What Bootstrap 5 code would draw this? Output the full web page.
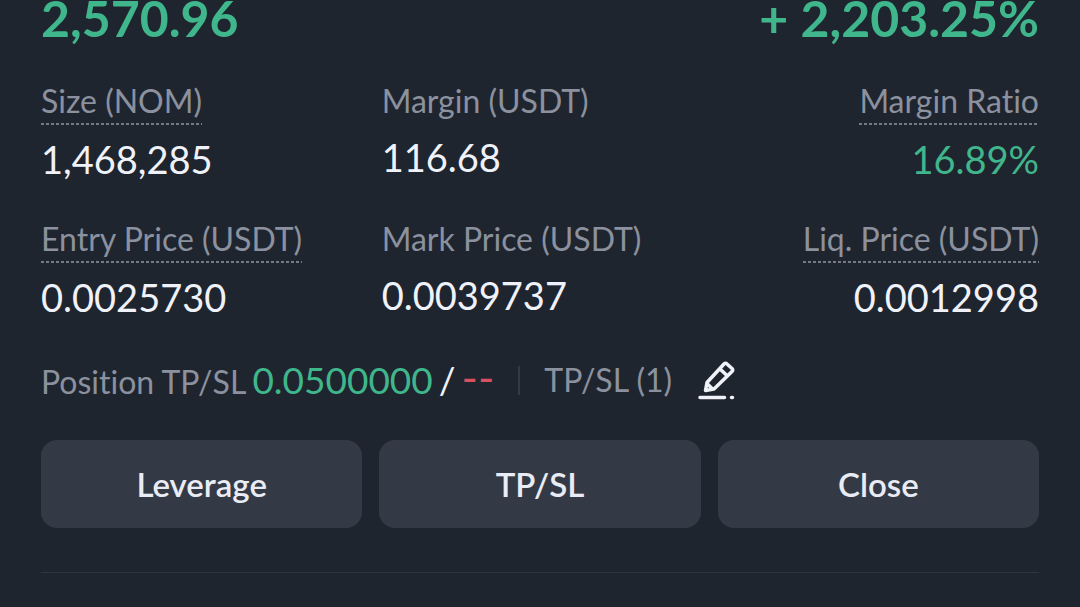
<!DOCTYPE html>
<html lang="en" data-bs-theme="dark">
<head>
<meta charset="utf-8">
<meta name="viewport" content="width=device-width, initial-scale=1">
<title>Position</title>
<link href="https://cdn.jsdelivr.net/npm/bootstrap@5.3.0/dist/css/bootstrap.min.css" rel="stylesheet">
<style>
  body { background: #1f252f; color: #f0f2fa; font-family: Lato, "Open Sans", sans-serif; font-variant-ligatures: none; }
  .position-panel { padding: 0 41px; }
  .gain { color: #3fb68b; }
  .loss { color: #d9505f; }
  .headline { font-size: 50px; line-height: 36px; font-weight: 700; }
  .stats { display: grid; grid-template-columns: repeat(3, 1fr); gap: 40px 24px; margin-top: 47px; }
  .stat-label { color: #8b919e; font-size: 32px; line-height: 36px; font-weight: 400; white-space: nowrap; }
  .stat-value { font-size: 38px; line-height: 44px; margin: 16px 0 0; }
  .hint::after { content: ""; display: block; height: 2px; margin-top: 4px;
    background: repeating-linear-gradient(90deg, #747a86 0 3px, transparent 3px 5px); }
  .hint + .stat-value { margin-top: 12px; }
  .orders { margin-top: 39px; line-height: 44px; }
  .order-set { gap: 6px; }
  .order-price { font-size: 37px; }
  .order-empty { font-size: 44px; line-height: 36px; }
  .split { width: 2px; height: 29px; background: #343a45; margin: 0 24px; }
  .edit { line-height: 0; margin-left: 26px; color: #f0f2fa; }
  .actions { display: grid; grid-template-columns: repeat(3, 1fr); gap: 17px; margin-top: 38px; }
  .action { --bs-btn-bg: #343a45; --bs-btn-color: #eaecf5; --bs-btn-border-color: transparent;
    --bs-btn-hover-bg: #3d4450; --bs-btn-hover-color: #fff; border: 0; border-radius: 16px;
    font-size: 33px; line-height: 40px; font-weight: 600; padding: 24px 0; }
  .divider { margin: 44px 0 0; border-top: 1px solid #343b45; opacity: .7; }
</style>
</head>
<body>
<main class="position-panel">
  <div class="headline gain d-flex justify-content-between">
    <span>2,570.96</span><span>+ 2,203.25%</span>
  </div>

  <dl class="stats mb-0">
    <div class="d-flex flex-column align-items-start">
      <dt class="stat-label hint">Size (NOM)</dt><dd class="stat-value">1,468,285</dd>
    </div>
    <div class="d-flex flex-column align-items-start">
      <dt class="stat-label">Margin (USDT)</dt><dd class="stat-value">116.68</dd>
    </div>
    <div class="d-flex flex-column align-items-end">
      <dt class="stat-label hint">Margin Ratio</dt><dd class="stat-value gain">16.89%</dd>
    </div>
    <div class="d-flex flex-column align-items-start">
      <dt class="stat-label hint">Entry Price (USDT)</dt><dd class="stat-value">0.0025730</dd>
    </div>
    <div class="d-flex flex-column align-items-start">
      <dt class="stat-label">Mark Price (USDT)</dt><dd class="stat-value">0.0039737</dd>
    </div>
    <div class="d-flex flex-column align-items-end">
      <dt class="stat-label hint">Liq. Price (USDT)</dt><dd class="stat-value">0.0012998</dd>
    </div>
  </dl>

  <div class="orders d-flex align-items-center">
    <div class="order-set d-flex align-items-baseline">
      <span class="stat-label">Position TP/SL</span>
      <span class="order-price gain">0.0500000</span>
      <span class="order-price">/</span>
      <span class="order-empty loss">--</span>
    </div>
    <div class="split"></div>
    <span class="stat-label">TP/SL (1)</span>
    <button type="button" class="btn edit border-0 p-0" aria-label="Edit TP/SL">
      <svg width="38" height="40" viewBox="0 0 38 40" fill="none" stroke="currentColor" stroke-width="3.500" stroke-linejoin="round" aria-hidden="true">
        <path d="M7.500 30.500 L9 22.500 L26 4 Q27.500 2.500 29 4 L34 8.500 Q35.500 10 34 11.500 L16 29 Z"/>
        <path d="M21.500 8.500 L29.500 16 M8.500 23 L15 29.500"/>
        <path d="M2 37.500 H26.500 M33.500 37.500 H34.500" stroke-linecap="round"/>
      </svg>
    </button>
  </div>

  <div class="actions">
    <button type="button" class="btn action">Leverage</button>
    <button type="button" class="btn action">TP/SL</button>
    <button type="button" class="btn action">Close</button>
  </div>

  <hr class="divider">
</main>
<script src="https://cdn.jsdelivr.net/npm/bootstrap@5.3.0/dist/js/bootstrap.bundle.min.js"></script>
</body>
</html>
